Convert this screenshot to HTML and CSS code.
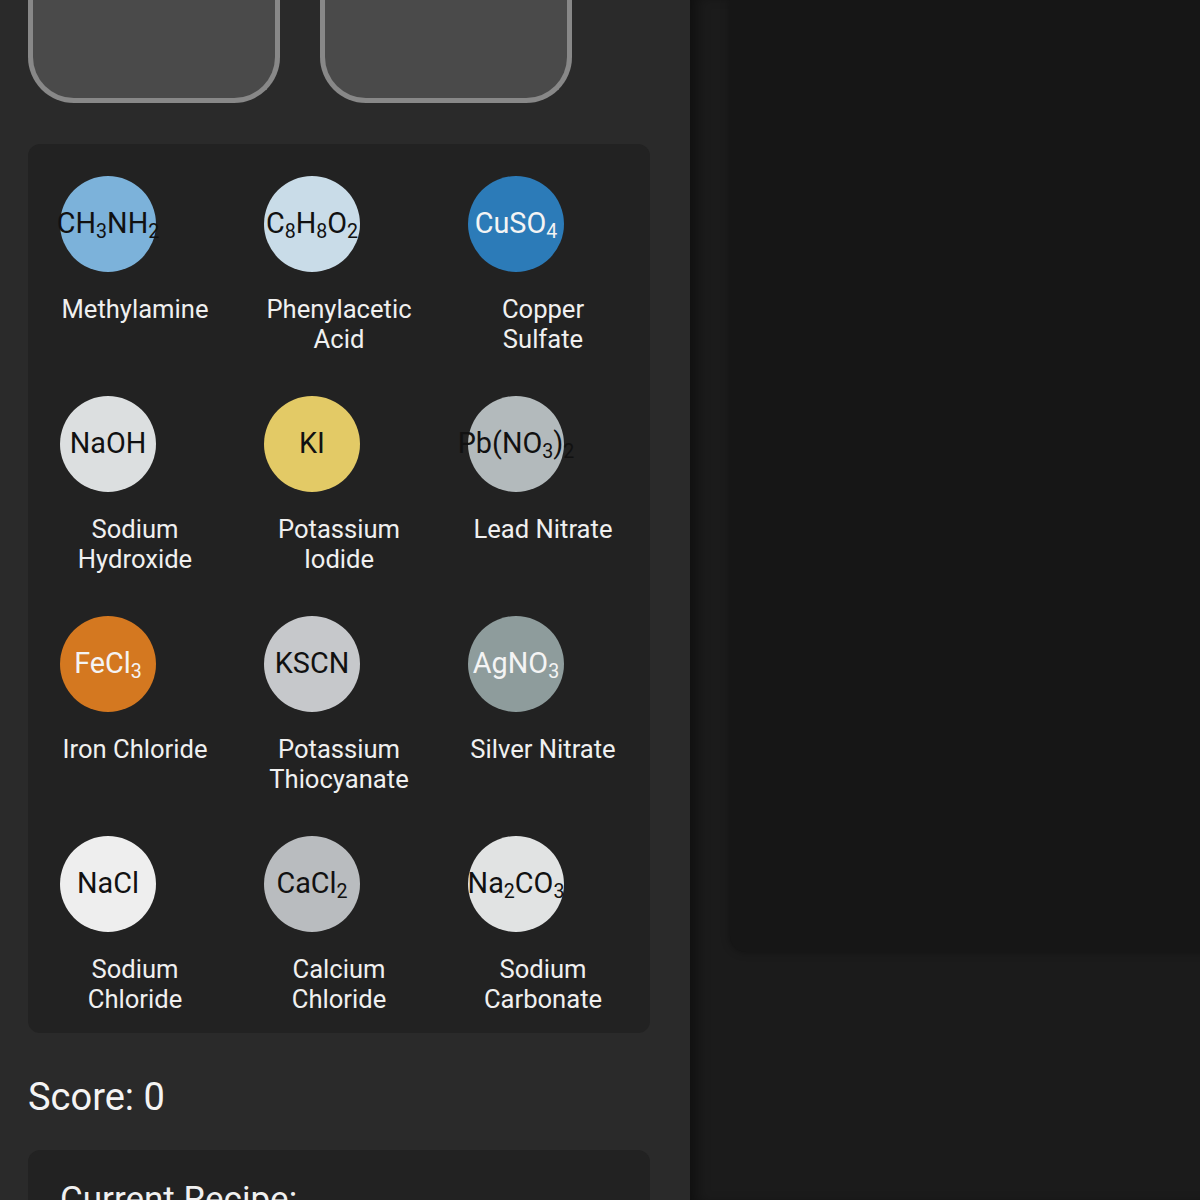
FILE: index.html
```html
<!DOCTYPE html>
<html>
<head>
<meta charset="utf-8">
<link rel="stylesheet" href="styles.css">
</head>
<body>
<div class="app">
  <div class="left">
    <div class="beakers">
      <div class="beaker"></div>
      <div class="beaker"></div>
    </div>
    <div class="ingredients">
      <div class="item"><div class="chem c-methyl"><span class="f">CH<sub>3</sub>NH<sub>2</sub></span></div><div class="label">Methylamine</div></div>
      <div class="item"><div class="chem c-phenyl"><span class="f">C<sub>8</sub>H<sub>8</sub>O<sub>2</sub></span></div><div class="label">Phenylacetic Acid</div></div>
      <div class="item"><div class="chem c-copper light"><span class="f">CuSO<sub>4</sub></span></div><div class="label">Copper Sulfate</div></div>
      <div class="item"><div class="chem c-naoh"><span class="f">NaOH</span></div><div class="label">Sodium Hydroxide</div></div>
      <div class="item"><div class="chem c-ki"><span class="f">KI</span></div><div class="label">Potassium Iodide</div></div>
      <div class="item"><div class="chem c-lead"><span class="f">Pb(NO<sub>3</sub>)<sub>2</sub></span></div><div class="label">Lead Nitrate</div></div>
      <div class="item"><div class="chem c-iron light"><span class="f">FeCl<sub>3</sub></span></div><div class="label">Iron Chloride</div></div>
      <div class="item"><div class="chem c-kscn"><span class="f">KSCN</span></div><div class="label">Potassium Thiocyanate</div></div>
      <div class="item"><div class="chem c-silver light"><span class="f">AgNO<sub>3</sub></span></div><div class="label">Silver Nitrate</div></div>
      <div class="item"><div class="chem c-nacl"><span class="f">NaCl</span></div><div class="label">Sodium Chloride</div></div>
      <div class="item"><div class="chem c-cacl"><span class="f">CaCl<sub>2</sub></span></div><div class="label">Calcium Chloride</div></div>
      <div class="item"><div class="chem c-na2co3"><span class="f">Na<sub>2</sub>CO<sub>3</sub></span></div><div class="label">Sodium Carbonate</div></div>
    </div>
    <div class="score">Score: 0</div>
    <div class="recipe">
      <div class="recipe-title">Current Recipe:</div>
    </div>
  </div>
  <div class="right">
    <div class="stage"></div>
  </div>
</div>
</body>
</html>
```

FILE: styles.css
```css
html, body {
  margin: 0;
  padding: 0;
  height: 100%;
  overflow: hidden;
  background: #1b1b1b;
  font-family: Roboto, "Liberation Sans", sans-serif;
}

.app {
  display: flex;
  height: 1200px;
  overflow: hidden;
}

.left {
  width: 690px;
  flex: none;
  box-sizing: border-box;
  background: #2a2a2a;
  padding: 0 40px 0 28px;
  color: #f2f2f2;
}

.beakers {
  display: flex;
  gap: 40px;
  margin-top: -97px;
}

.beaker {
  width: 252px;
  height: 200px;
  box-sizing: border-box;
  background: #4a4a4a;
  border: 5px solid #888888;
  border-top: none;
  border-radius: 0 0 46px 46px;
}

.ingredients {
  margin-top: 41px;
  background: #222222;
  border-radius: 12px;
  padding: 32px 32px 19px;
  display: grid;
  grid-template-columns: repeat(3, 150px);
  column-gap: 54px;
  row-gap: 42px;
}

.item {
  width: 150px;
}

.chem {
  width: 96px;
  height: 96px;
  border-radius: 50%;
  display: flex;
  align-items: center;
  justify-content: center;
  white-space: nowrap;
  font-size: 28.8px;
  color: #111;
  line-height: 1;
}

.chem .f {
  display: block;
  flex: none;
  margin-top: -2px;
}

.chem.light {
  color: #f4f4f4;
}

.chem sub {
  font-size: 0.68em;
  vertical-align: -0.25em;
  line-height: 0;
}

.c-methyl { background: #7cb2da; }
.c-phenyl { background: #c9dce8; }
.c-copper { background: #2c7bb8; }
.c-naoh { background: #dcdfe0; }
.c-ki { background: #e3ca66; }
.c-lead { background: #b3babc; }
.c-iron { background: #d47820; }
.c-kscn { background: #c6c8cb; }
.c-silver { background: #8e9c9c; }
.c-nacl { background: #eeeeee; }
.c-cacl { background: #b9bcbf; }
.c-na2co3 { background: #e1e3e3; }

.label {
  margin-top: 22px;
  text-align: center;
  font-size: 25.6px;
  line-height: 30px;
  color: #f0f0f0;
}

.score {
  font-size: 38px;
  line-height: 44px;
  margin: 42px 0 31px;
  color: #f4f4f4;
}

.recipe {
  background: #222222;
  border-radius: 12px;
  padding: 30px 32px;
  height: 200px;
}

.recipe-title {
  font-size: 35px;
  line-height: 40px;
  color: #f0f0f0;
}

.right {
  flex: 1;
  background: #1b1b1b;
  box-shadow: inset 12px 0 14px -6px rgba(0, 0, 0, 0.45);
  display: flex;
  align-items: flex-start;
}

.stage {
  flex: 1;
  margin-left: 40px;
  margin-right: -20px;
  height: 952px;
  background: #161616;
  border-bottom-left-radius: 16px;
  box-shadow: 0 0 8px rgba(0, 0, 0, 0.35);
}
```
